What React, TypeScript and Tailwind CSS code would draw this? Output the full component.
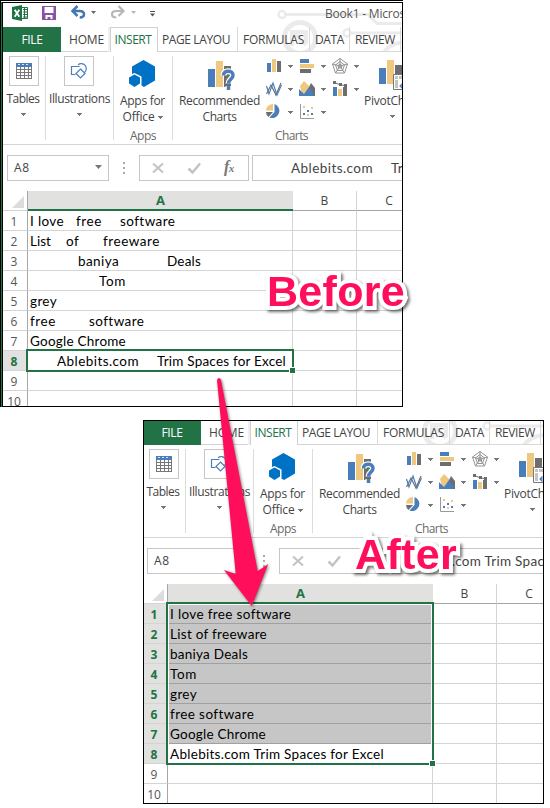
import { useLayoutEffect, useRef, type ReactNode } from "react";

type Seg = [text: string, start: number, width: number];

/* Text whose tracking is tuned so that it fills an exact width. */
function Fit({ w, children, className = "" }: { w: number; children: string; className?: string }) {
  const ref = useRef<HTMLSpanElement>(null);
  useLayoutEffect(() => {
    const el = ref.current;
    if (!el) return;
    el.style.letterSpacing = "0px";
    const natural = el.getBoundingClientRect().width;
    el.style.letterSpacing = `${(w - natural) / children.length}px`;
  }, [w, children]);
  return (
    <span ref={ref} className={`inline-block shrink-0 whitespace-pre ${className}`}>
      {children}
    </span>
  );
}

function Caret({ className = "" }: { className?: string }) {
  return (
    <svg width="5" height="3" viewBox="0 0 5 3" className={`shrink-0 ${className}`} shapeRendering="crispEdges">
      <path d="M0 0h5v1h-1v1h-1v1h-1v-1h-1v-1h-1z" fill="currentColor" />
    </svg>
  );
}

function Segments({ items, origin }: { items: Seg[]; origin: number }) {
  return (
    <>
      {items.map(([text, start, width], i) => {
        const prev = i === 0 ? origin : items[i - 1][1] + items[i - 1][2];
        return (
          <span key={text} className="flex shrink-0" style={{ marginLeft: start - prev }}>
            <Fit w={width}>{text}</Fit>
          </span>
        );
      })}
    </>
  );
}

function Circuit() {
  return (
    <svg className="absolute left-0 top-0" width="401" height="52" viewBox="3 3 401 52" fill="none" stroke="#ebebeb">
      <circle cx="282" cy="14.500" r="3.500" strokeWidth="2.500" />
      <path d="M286 14.500h82l9 9h27" strokeWidth="3" />
      <circle cx="300" cy="38" r="15.500" strokeWidth="5" />
      <path d="M292 46V32h14M306 30v14M293 32l13 13" strokeWidth="4" />
      <circle cx="347" cy="33" r="3.500" strokeWidth="2.500" />
      <path d="M351 33h54" strokeWidth="3" />
      <path d="M383 55c3-8 10-12 21-13" strokeWidth="4" />
    </svg>
  );
}

function TitleBar() {
  return (
    <div className="relative flex h-[24px] shrink-0">
      <svg width="160" height="24" viewBox="3 3 160 24" className="shrink-0">
        <path d="M22 7.500h5.500v11H22" fill="#fff" stroke="#217346" />
        <path d="M23 9.500h4M23 12h4M23 14.500h4M23 17h4M24.500 8v11" stroke="#217346" />
        <path d="M12 7l10-2v16l-10-2z" fill="#217346" />
        <path d="M14.700 9.800l4.600 7M19.300 9.800l-4.600 7" stroke="#fff" strokeWidth="1.800" />
        <path d="M42 6h14v14H42z" fill="#8653a5" />
        <path d="M44.500 7h9v6h-9zM45.500 15h7v4h-2v-2h-3v2h-2z" fill="#fff" />
        <path d="M73 11h6.500c3 0 4.500 1.700 4.500 3.300 0 1.900-1.500 3.200-4.300 3.200" fill="none" stroke="#4377b5" strokeWidth="2.500" />
        <path d="M77.500 6L72.500 11l5 5" fill="none" stroke="#4377b5" strokeWidth="2.500" />
        <path d="M123 11h-6.500c-3 0-4.500 1.700-4.500 3.300 0 1.900 1.500 3.200 4.300 3.200" fill="none" stroke="#b7b7b7" strokeWidth="2.200" />
        <path d="M118.500 6l5 5-5 5" fill="none" stroke="#b7b7b7" strokeWidth="2.200" />
        <path d="M91 11h5l-2.500 3z" fill="#666" />
        <path d="M131 11h5l-2.500 3z" fill="#b7b7b7" />
        <path d="M150 11h5v1h-5zM150 13.500h5l-2.500 3z" fill="#555" />
      </svg>
      <div className="ml-[162px] pt-[2px] text-[12px] leading-[18px] text-[#555]">
        <Fit w={95}>Book1 - Microsoft</Fit>
      </div>
    </div>
  );
}

function Tabs() {
  return (
    <div className="relative flex h-[25px] shrink-0 text-[12px] leading-[25px] text-[#444]">
      <div className="flex w-[58px] shrink-0 justify-center bg-[#217346] text-white">
        <Fit w={21}>FILE</Fit>
      </div>
      <div className="flex w-[49px] shrink-0 border-b border-[#d4d4d4] pl-[8px]">
        <Fit w={35}>HOME</Fit>
      </div>
      <div className="flex w-[48px] shrink-0 justify-center border-x border-t border-[#d0d0d0] bg-white pr-[2px] leading-[23px] text-[#217346] shadow-[-2px_0_0_#f0f0f0]">
        <Fit w={37}>INSERT</Fit>
      </div>
      <div className="flex w-[79px] shrink-0 border-b border-[#d4d4d4] pl-[4px]">
        <Fit w={68}>PAGE LAYOU</Fit>
      </div>
      <div className="flex w-[72px] shrink-0 border-b border-l border-[#d9d9d9] pl-[5px]">
        <Fit w={61}>FORMULAS</Fit>
      </div>
      <div className="flex w-[40px] shrink-0 border-b border-l border-[#d9d9d9] pl-[5px]">
        <Fit w={29}>DATA</Fit>
      </div>
      <div className="flex w-[51px] shrink-0 border-b border-l border-[#d9d9d9] pl-[5px]">
        <Fit w={40}>REVIEW</Fit>
      </div>
      <div className="w-[10px] shrink-0 border-b border-l border-[#d9d9d9]" />
    </div>
  );
}

const B = "#4a7ebb";
const Y = "#edc87e";
const G = "#6d6d6d";

const miniCharts: ReactNode[] = [
  <g key="column">
    <path d="M1 5h4v9H1z" fill={B} />
    <path d="M6 1h4v13H6z" fill={Y} />
    <path d="M11 3h4v11h-4z" fill={G} />
  </g>,
  <g key="bar">
    <path d="M1 1h9v4H1z" fill={B} />
    <path d="M1 6h14v4H1z" fill={Y} />
    <path d="M1 11h11v4H1z" fill={G} />
  </g>,
  <g key="radar" fill="none" stroke="#888" strokeWidth=".9">
    <path d="M8 .5L15.500 6l-3 9h-9L.5 6z" />
    <path d="M8 3.500l4.500 3.500-2 5.500h-5l-2-5.500z" />
    <path d="M8 6l2 1.500-.7 2.500H6.700L6 7.500z" />
    <path d="M8 .5V8l7.500-2M8 8l4.500 7M8 8l-4.500 7M8 8L.5 6" />
  </g>,
  <g key="line" fill="none" strokeWidth="1.200">
    <path d="M.5 13L5 4l5 10L15 2" stroke={G} />
    <path d="M.5 5L3 13 7 2l4 12 4.500-10" stroke={B} />
  </g>,
  <g key="area">
    <path d="M10 6l2-4 4 5v8h-6z" fill={G} />
    <path d="M1 5l4-5 5 5v8H3z" fill={Y} />
    <path d="M0 15V8l5 5 5-7 5 7v2z" fill={B} />
  </g>,
  <g key="combo">
    <path d="M1 6h4v9H1z" fill={B} />
    <path d="M6 8h4v7H6z" fill={Y} />
    <path d="M11 6h4v9h-4z" fill={G} />
    <path d="M2.500 1.500l6 2.500 5 .5" fill="none" stroke={G} />
    <path d="M1 0h3v3H1zM7 2h3v3H7zM12 3h3v3h-3z" fill={G} />
  </g>,
  <g key="pie">
    <path d="M7 6.500V0a7 7 0 0 0-7 6.500z" fill={Y} />
    <path d="M7 8H0a7 7 0 0 0 2.500 5z" fill={G} />
    <path d="M8.500 0a7.200 7.200 0 1 1-5 13.500l5-5.500z" fill={B} />
  </g>,
  <g key="scatter">
    <path d="M1.500 0v14.500H15" fill="none" stroke="#999" />
    <path d="M4 9h2v2H4zM8 6h2v2H8zM12 9h2v2h-2z" fill={B} />
    <path d="M4 2h2v2H4zM8 10h2v2H8zM12 3h2v2h-2z" fill={Y} />
  </g>,
];

function Ribbon() {
  return (
    <div className="relative flex h-[93px] shrink-0 border-b border-[#d4d4d4] bg-white text-[12px] leading-[16px] text-[#444]">
      <div className="flex w-[42px] shrink-0 flex-col items-center pt-[4px]">
        <div className="flex size-[30px] items-center justify-center border border-[#c6c6c6]">
          <svg width="16" height="16" viewBox="0 0 16 16" shapeRendering="crispEdges">
            <path d="M0 0h16v16H0z" fill="#777" />
            <path d="M0 0h16v4H0z" fill={B} />
            <path d="M1 4h3v2H1zM5 4h3v2H5zM9 4h3v2H9zM13 4h2v2h-2zM1 7h3v2H1zM5 7h3v2H5zM9 7h3v2H9zM13 7h2v2h-2zM1 10h3v2H1zM5 10h3v2H5zM9 10h3v2H9zM13 10h2v2h-2zM1 13h3v2H1zM5 13h3v2H5zM9 13h3v2H9zM13 13h2v2h-2z" fill="#fff" />
            <path d="M2 1h2v1H2zM6 1h2v1H6zM10 1h2v1h-2z" fill="#dce8f5" />
          </svg>
        </div>
        <div className="mr-[2px] mt-[5px] flex">
          <Fit w={33}>Tables</Fit>
        </div>
        <Caret className="mr-[2px] mt-[6px] text-[#777]" />
      </div>
      <div className="mt-[4px] h-[84px] w-px shrink-0 bg-[#dcdcdc]" />
      <div className="flex w-[67px] shrink-0 flex-col items-center pt-[4px]">
        <div className="mr-[1px] flex size-[30px] items-center justify-center border border-[#c6c6c6]">
          <svg width="18" height="18" viewBox="0 0 18 18" fill="none" stroke={B} strokeWidth="1.200">
            <path d="M9.500 4.500h-8v8h4" />
            <path d="M8 2.800A5 5 0 1 1 14.500 10.500" />
            <path d="M10.500 7l4.500 4.500-4.500 4.500L6 11.500z" />
          </svg>
        </div>
        <div className="mt-[5px] flex">
          <Fit w={61}>Illustrations</Fit>
        </div>
        <Caret className="mt-[6px] text-[#777]" />
      </div>
      <div className="mt-[4px] h-[84px] w-px shrink-0 bg-[#dcdcdc]" />
      <div className="flex w-[58px] shrink-0 flex-col items-center pt-[8px]">
        <svg width="26" height="27" viewBox="0 0 26 27" fill="#0072c6" className="mr-[3px]">
          <path d="M14.500 0L26 6.500v14L15 27l-2.500-1.500v-9L5.500 13 3 14V6.500z" />
          <path d="M5.500 14.500l5.500 3v6L5.500 27 0 23.500v-6z" />
        </svg>
        <div className="mr-[1px] mt-[6px] flex">
          <Fit w={45}>Apps for</Fit>
        </div>
        <div className="mr-[1px] flex items-center gap-[3px]">
          <Fit w={32}>Office</Fit>
          <Caret className="text-[#777]" />
        </div>
        <div className="mt-[3px] flex text-[#6a6a6a]">
          <Fit w={26}>Apps</Fit>
        </div>
      </div>
      <div className="mt-[4px] h-[84px] w-px shrink-0 bg-[#dcdcdc]" />
      <div className="flex shrink-0 flex-col">
        <div className="flex h-[76px]">
          <div className="flex w-[93px] flex-col items-center pt-[7px]">
            <svg width="32" height="32" viewBox="0 0 32 32">
              <path d="M4 10h7v18H4z" fill={B} />
              <path d="M12 2h7v26h-7z" fill={Y} />
              <path d="M20 7h7v21h-7z" fill={G} />
              <path d="M19.500 16.500c0-6 9.500-5.500 9.500-.3 0 4-4.500 4-4.500 8.300M24.500 27v4" fill="none" stroke="#fff" strokeWidth="6" />
              <path d="M19.500 16.500c0-6 9.500-5.500 9.500-.3 0 4-4.500 4-4.500 8.300M24.500 27v4" fill="none" stroke={B} strokeWidth="3.500" />
            </svg>
            <div className="mt-[2px] flex">
              <Fit w={81}>Recommended</Fit>
            </div>
            <Fit w={34}>Charts</Fit>
          </div>
          <div className="grid w-[99px] grid-cols-3 grid-rows-[23px_23px_23px] pt-[6px]">
            {miniCharts.map((c, i) => (
              <div key={i} className="flex h-[16px] items-center gap-[6px]">
                <svg width="16" height="16" viewBox="0 0 16 16">
                  {c}
                </svg>
                <Caret className="text-[#777]" />
              </div>
            ))}
          </div>
          <div className="flex w-[54px] flex-col items-center pt-[7px]">
            <svg width="32" height="32" viewBox="376 59 32 32" className="ml-[1px]">
              <path d="M378 68h7v16h-7z" fill={B} />
              <path d="M386 60h7v24h-7z" fill={Y} />
              <path d="M394 65h7v12h-7z" fill={G} />
              <path d="M392.500 74.500h16v15h-16z" fill="#fff" stroke="#777" />
              <path d="M394 76h3v3h-3zM398 76h8v3h-8zM394 80h3v8h-3z" fill="#c4c4c4" />
              <path d="M406 81v5h-7M401.500 83.500L399 86l2.500 2.500" fill="none" stroke={B} strokeWidth="1.200" />
            </svg>
            <div className="mt-[2px] flex">
              <Fit w={56}>PivotChart</Fit>
            </div>
            <Caret className="mt-[6px] text-[#777]" />
          </div>
        </div>
        <div className="flex w-[237px] justify-center text-[#6a6a6a]">
          <Fit w={33}>Charts</Fit>
        </div>
      </div>
    </div>
  );
}

function FormulaBar({ formula }: { formula: Seg[] }) {
  return (
    <div className="flex h-[46px] shrink-0 pt-[10px] text-[#444]">
      <div className="ml-[4px] flex h-[26px] w-[102px] shrink-0 items-center justify-between border border-[#c6c6c6] pl-[6px] pr-[6px] text-[12px]">
        <Fit w={16}>A8</Fit>
        <svg width="7" height="4" viewBox="0 0 7 4" className="mb-[3px]">
          <path d="M0 0h7L3.500 4z" fill="#777" />
        </svg>
      </div>
      <div className="flex h-[26px] w-[30px] shrink-0 flex-col items-center justify-center gap-[3px]">
        <i className="size-[2px] bg-[#aaa]" />
        <i className="size-[2px] bg-[#aaa]" />
        <i className="size-[2px] bg-[#aaa]" />
      </div>
      <div className="flex h-[26px] w-[110px] shrink-0 items-center border border-[#c6c6c6]">
        <svg width="70" height="24" viewBox="140 156 70 24" className="shrink-0" fill="none" stroke="#c3c3c3" strokeWidth="2">
          <path d="M153 163.500l10 9M163 163.500l-10 9" />
          <path d="M188.500 168.500l4 4 7.500-9" strokeWidth="2.500" />
        </svg>
        <span className="mb-[2px] ml-[14px] font-['Liberation_Serif',serif] text-[16px] font-bold italic leading-[20px] tracking-[-0.500px] text-[#777]">
          f<span className="text-[11px]">x</span>
        </span>
      </div>
      <div className="ml-[3px] flex h-[26px] w-[160px] shrink-0 items-center border border-[#c6c6c6] font-[Lato,sans-serif] text-[13.500px]">
        <Segments items={formula} origin={253} />
      </div>
    </div>
  );
}

function Sheet({ rows, trimmed }: { rows: Seg[][]; trimmed: boolean }) {
  return (
    <div className="relative flex shrink-0 flex-col">
      <div className="flex h-[20px] text-[12px] leading-[19px] text-[#444]">
        <div className="flex w-[25px] shrink-0 items-end justify-end border-b border-r border-b-[#d4d4d4] border-r-[#a6a6a6] pb-[2px] pr-[3px]">
          <svg width="12" height="12" viewBox="0 0 12 12">
            <path d="M12 0v12H0z" fill="#dcdcdc" />
          </svg>
        </div>
        <div className="flex w-[265px] shrink-0 justify-center border-b-2 border-[#217346] bg-[#e1e1df] text-[13px] font-bold leading-[18px] text-[#217346]">
          A
        </div>
        <div className="w-[64px] shrink-0 border-b border-r border-b-[#a6a6a6] border-r-[#d4d4d4] text-center">B</div>
        <div className="w-[64px] shrink-0 border-b border-b-[#a6a6a6] text-center">C</div>
      </div>
      {Array.from({ length: 10 }, (_, i) => {
        const active = trimmed ? i < 8 : i === 7;
        return (
          <div key={i} className="flex h-[20px] shrink-0">
            <div
              className={`w-[25px] shrink-0 border-b border-r border-b-[#d4d4d4] border-r-[#a6a6a6] pr-[2px] text-center text-[12px] leading-[21px] ${
                active ? "bg-[#e1e1df] font-bold text-[#217346]" : "text-[#555]"
              }`}
            >
              {i + 1}
            </div>
            <div
              className={`flex w-[265px] shrink-0 items-center border-b border-r border-r-[#d4d4d4] pt-[2px] font-[Lato,sans-serif] text-[13.500px] leading-[17px] text-black ${
                trimmed && i < 7 ? "border-b-[#a0a0a0] bg-[#c6c6c6]" : "border-b-[#d4d4d4]"
              }`}
            >
              <Segments items={rows[i] ?? []} origin={28} />
            </div>
            <div className="w-[64px] shrink-0 border-b border-r border-[#d4d4d4]" />
            <div className="w-[64px] shrink-0 border-b border-[#d4d4d4]" />
          </div>
        );
      })}
      <div className={`absolute left-[23px] w-[268px] border-2 border-[#217346] ${trimmed ? "top-[18px] h-[163px]" : "top-[158px] h-[23px]"}`}>
        {trimmed && <div className="size-full border border-b-0 border-white" />}
        <div className="absolute -bottom-[4px] -right-[4px] size-[7px] border border-white bg-[#217346]" />
      </div>
    </div>
  );
}

const before: Seg[][] = [
  [["I love", 30, 34], ["free", 76, 26], ["software", 120, 55]],
  [["List", 30, 21], ["of", 66, 13], ["freeware", 103, 57]],
  [["baniya", 78, 41], ["Deals", 167, 34]],
  [["Tom", 99, 27]],
  [["grey", 30, 27]],
  [["free", 30, 26], ["software", 89, 55]],
  [["Google Chrome", 30, 96]],
  [["Ablebits.com", 57, 82], ["Trim Spaces for Excel", 157, 129]],
];

const after: Seg[][] = [
  [["I love free software", 30, 121]],
  [["List of freeware", 30, 97]],
  [["baniya Deals", 30, 78]],
  [["Tom", 30, 27]],
  [["grey", 30, 27]],
  [["free software", 30, 84]],
  [["Google Chrome", 30, 96]],
  [["Ablebits.com Trim Spaces for Excel", 30, 214]],
];

const bigLabel =
  "absolute font-['Liberation_Sans',Arial,sans-serif] text-[43px] font-bold leading-[44px] text-[#ff0f5b] [-webkit-text-stroke:8px_white] [paint-order:stroke_fill] [stroke-linejoin:round] drop-shadow-[2px_2px_1.500px_rgba(0,0,0,0.55)]";

export default function App() {
  return (
    <div className="relative h-[808px] w-[550px] overflow-hidden bg-white font-['Open_Sans','Noto_Sans',sans-serif]">
      <div className="absolute left-0 top-0 h-[407px] w-[403px] border-l border-t border-black bg-white">
        <div className="absolute left-0 top-[1px] h-[405px] w-px bg-[#217346]" />
        <div className="absolute left-[1px] top-[1px] h-[405px] w-[401px] overflow-hidden border border-black">
          <div className="relative flex h-[420px] w-[410px] flex-col">
            <Circuit />
            <TitleBar />
            <Tabs />
            <Ribbon />
            <FormulaBar formula={[["Ablebits.com", 291, 82], ["Trim Spaces for Excel", 391, 129]]} />
            <Sheet rows={before} trimmed={false} />
          </div>
        </div>
      </div>

      <div className="absolute left-[143px] top-[420px] h-[384px] w-[401px] overflow-hidden">
        <div className="relative -mt-[24px] flex h-[420px] w-[410px] flex-col">
          <Circuit />
          <TitleBar />
          <Tabs />
          <Ribbon />
          <FormulaBar formula={[["Ablebits.com Trim Spaces for Excel", 261, 214]]} />
          <Sheet rows={after} trimmed />
        </div>
        <div className="absolute inset-0 border border-black" />
      </div>

      <svg className="absolute left-[205px] top-[370px] drop-shadow-[1px_1px_1.500px_rgba(0,0,0,0.5)]" width="75" height="245" viewBox="205 370 75 245">
        <path d="M217 380Q219 376 221 380L257.700 571 268.300 564 251.700 606 224 570 235.700 574z" fill="#ff0f5b" />
      </svg>
      <div className={`${bigLabel} left-[267px] top-[269px]`}>
        <Fit w={138}>Before</Fit>
      </div>
      <div className={`${bigLabel} left-[355px] top-[532px]`}>
        <Fit w={102}>After</Fit>
      </div>
    </div>
  );
}
